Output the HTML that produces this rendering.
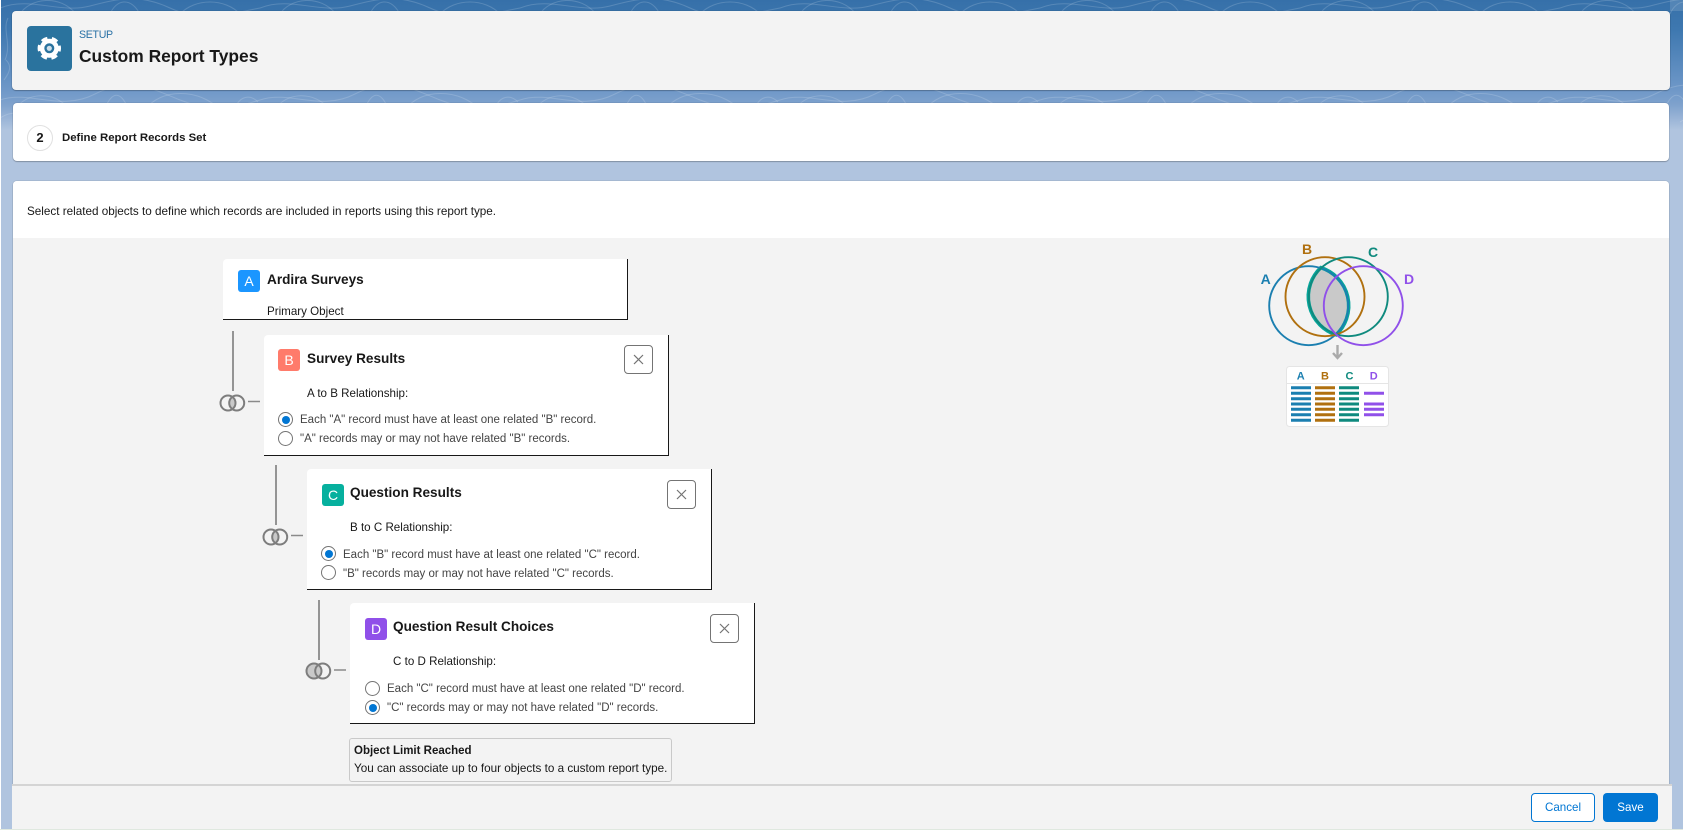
<!DOCTYPE html>
<html><head><meta charset="utf-8"><title>Custom Report Types</title>
<style>
*{box-sizing:border-box}
html,body{margin:0;padding:0;width:1683px;height:830px;overflow:hidden;background:#b0c4df;font-family:"Liberation Sans",sans-serif;color:#181818}
.a{position:absolute}
.t{position:absolute;white-space:nowrap;line-height:16px;font-size:11.6px}
.card{position:absolute;background:#fff;border-radius:4px;box-shadow:0 0 0 1px rgba(0,0,0,.06),0 1px 1px rgba(0,0,0,.22)}
.obj{position:absolute;background:#fff;border-right:1px solid #181818;border-bottom:1px solid #181818;border-radius:4px 0 0 0;width:405px;height:121px}
.badge{position:absolute;width:22px;height:22px;border-radius:3px;color:#fff;text-align:center;font-size:14px;line-height:23px}
.ttl{position:absolute;font-weight:bold;font-size:13.6px;line-height:18px;white-space:nowrap}
.x{position:absolute;width:29px;height:29px;border:1px solid #747474;border-radius:4px;background:#fff}
.r{position:absolute;width:15px;height:15px;border-radius:50%;border:1px solid #747474;background:#fff}
.r.on:after{content:"";position:absolute;left:2.5px;top:2.5px;width:8px;height:8px;border-radius:50%;background:#0176d3}
.g{color:#444;font-size:11.5px}
.ln{position:absolute;width:2px;height:60px;background:#949494}
</style></head><body>
<div class="a" style="left:0;top:0;width:1683px;height:135px;background:linear-gradient(#3670a9 0,#3e78b0 30px,#6f98c8 90px,#7fa2cd 105px,#b0c4df 130px)"></div>
<div class="a" style="left:0;top:0;width:1px;height:830px;background:#fff"></div>
<svg class="a" style="left:0;top:0" width="1683" height="125" fill="none">
<defs><pattern id="p" width="260" height="125" patternUnits="userSpaceOnUse">
<g stroke="#fff" stroke-opacity=".16" stroke-width="1" fill="none">
<path d="M0 8C30 -4 60 14 90 6S140 -6 170 8S230 14 260 8"/>
<path d="M20 14C30 -2 60 -6 76 14M110 14C116 0 130 -4 140 14M180 14C195 -2 225 -2 240 14"/>
<path d="M0 100C30 90 60 112 95 94S150 88 180 100S235 108 260 100"/>
<path d="M15 110C25 92 55 90 70 110M105 108C112 92 120 90 128 108M145 110C160 88 200 88 220 110M235 108C240 96 250 94 258 102"/>
<path d="M5 60C12 44 2 30 8 18M255 70C262 50 250 40 258 20M4 80C10 72 12 66 6 60"/>
<path d="M0 118C12 110 28 112 40 120M120 122C140 110 170 110 190 122"/>
</g></pattern></defs>
<rect width="1683" height="125" fill="url(#p)"/>
</svg>
<div class="a" style="left:1670px;top:0;width:13px;height:11px;background:rgba(255,255,255,.14)"></div>

<div class="card" style="left:12px;top:11px;width:1658px;height:79px;background:#f3f3f3"></div>
<div class="a" style="left:27px;top:26px;width:45px;height:45px;background:#2a739e;border-radius:4px"></div>
<svg class="a" style="left:27px;top:26px" width="45" height="45" fill="none">
<circle cx="22.3" cy="22.3" r="7.25" stroke="#fff" stroke-width="4.5"/>
<circle cx="22.3" cy="22.3" r="10.4" stroke="#fff" stroke-width="2.6" stroke-dasharray="6.2 4.69" stroke-dashoffset="3.1"/>
<circle cx="22.3" cy="22.3" r="2.6" fill="#cfe0ea"/>
</svg>
<div class="t" style="left:79px;top:27px;color:#2a72a6;font-size:10.6px;letter-spacing:-.3px">SETUP</div>
<div class="t" style="left:79px;top:46px;font-size:17.4px;line-height:20px;font-weight:bold">Custom Report Types</div>

<div class="card" style="left:13px;top:103px;width:1656px;height:58px"></div>
<div class="a" style="left:27px;top:125px;width:26px;height:26px;border:1px solid #e0e0e0;border-radius:50%;text-align:center;font-size:13px;line-height:24px;font-weight:bold;background:#fff">2</div>
<div class="t" style="left:62px;top:130px;font-size:11.4px;font-weight:bold">Define Report Records Set</div>

<div class="card" style="left:13px;top:181px;width:1656px;height:620px;background:#f3f3f3"></div>
<div class="a" style="left:13px;top:181px;width:1656px;height:57px;background:#fff;border-radius:4px 4px 0 0"></div>
<div class="t" style="left:27px;top:204px;font-size:11.7px">Select related objects to define which records are included in reports using this report type.</div>

<!-- A -->
<div class="obj" style="left:223px;top:259px;height:61px"></div>
<div class="badge" style="left:238px;top:270px;background:#1b96ff">A</div>
<div class="ttl" style="left:267px;top:271px">Ardira Surveys</div>
<div class="t" style="left:267px;top:304px">Primary Object</div>

<!-- B -->
<div class="ln" style="left:232px;top:331px"></div>
<svg class="a" style="left:215px;top:390px" width="50" height="26" fill="none">
<path d="M17.35 6.6A7.5 7.5 0 0 1 17.35 19.4A7.5 7.5 0 0 1 17.35 6.6Z" fill="#c9c9c9"/>
<circle cx="13" cy="13" r="7.5" stroke="#7d7d7d" stroke-width="2"/><circle cx="21.7" cy="13" r="7.5" stroke="#7d7d7d" stroke-width="2"/>
<path d="M33 11.5H45" stroke="#8a8a8a" stroke-width="1.5"/></svg>
<div class="obj" style="left:264px;top:335px"></div>
<div class="badge" style="left:278px;top:349px;background:#ff7b6b">B</div>
<div class="ttl" style="left:307px;top:350px">Survey Results</div>
<div class="x" style="left:624px;top:345px"><svg width="27" height="27" fill="none" stroke="#747474" stroke-width="1.2"><path d="M9 9L18 18M18 9L9 18"/></svg></div>
<div class="t" style="left:307px;top:386px">A to B Relationship:</div>
<div class="r on" style="left:278px;top:412px"></div>
<div class="t g" style="left:300px;top:412px">Each "A" record must have at least one related "B" record.</div>
<div class="r" style="left:278px;top:431px"></div>
<div class="t g" style="left:300px;top:431px">"A" records may or may not have related "B" records.</div>

<!-- C -->
<div class="ln" style="left:275px;top:465px"></div>
<svg class="a" style="left:258px;top:524px" width="50" height="26" fill="none">
<path d="M17.35 6.6A7.5 7.5 0 0 1 17.35 19.4A7.5 7.5 0 0 1 17.35 6.6Z" fill="#c9c9c9"/>
<circle cx="13" cy="13" r="7.5" stroke="#7d7d7d" stroke-width="2"/><circle cx="21.7" cy="13" r="7.5" stroke="#7d7d7d" stroke-width="2"/>
<path d="M33 11.5H45" stroke="#8a8a8a" stroke-width="1.5"/></svg>
<div class="obj" style="left:307px;top:469px"></div>
<div class="badge" style="left:322px;top:484px;background:#06b09e">C</div>
<div class="ttl" style="left:350px;top:484px">Question Results</div>
<div class="x" style="left:667px;top:480px"><svg width="27" height="27" fill="none" stroke="#747474" stroke-width="1.2"><path d="M9 9L18 18M18 9L9 18"/></svg></div>
<div class="t" style="left:350px;top:520px">B to C Relationship:</div>
<div class="r on" style="left:321px;top:546px"></div>
<div class="t g" style="left:343px;top:547px">Each "B" record must have at least one related "C" record.</div>
<div class="r" style="left:321px;top:565px"></div>
<div class="t g" style="left:343px;top:566px">"B" records may or may not have related "C" records.</div>

<!-- D -->
<div class="ln" style="left:318px;top:600px"></div>
<svg class="a" style="left:301px;top:658px" width="50" height="26" fill="none">
<circle cx="13" cy="13" r="7.5" fill="#c9c9c9"/>
<circle cx="13" cy="13" r="7.5" stroke="#7d7d7d" stroke-width="2"/><circle cx="21.7" cy="13" r="7.5" stroke="#7d7d7d" stroke-width="2"/>
<path d="M33 12H45" stroke="#8a8a8a" stroke-width="1.5"/></svg>
<div class="obj" style="left:350px;top:603px"></div>
<div class="badge" style="left:365px;top:618px;background:#9050e9">D</div>
<div class="ttl" style="left:393px;top:618px">Question Result Choices</div>
<div class="x" style="left:710px;top:614px"><svg width="27" height="27" fill="none" stroke="#747474" stroke-width="1.2"><path d="M9 9L18 18M18 9L9 18"/></svg></div>
<div class="t" style="left:393px;top:654px">C to D Relationship:</div>
<div class="r" style="left:365px;top:681px"></div>
<div class="t g" style="left:387px;top:681px">Each "C" record must have at least one related "D" record.</div>
<div class="r on" style="left:365px;top:700px"></div>
<div class="t g" style="left:387px;top:700px">"C" records may or may not have related "D" records.</div>

<div class="a" style="left:349px;top:738px;width:323px;height:44px;border:1px solid #c9c9c9;border-radius:3px;background:#f3f3f3"></div>
<div class="t" style="left:354px;top:743px;font-weight:bold;font-size:11.5px">Object Limit Reached</div>
<div class="t" style="left:354px;top:761px;font-size:11.7px">You can associate up to four objects to a custom report type.</div>

<!-- Venn -->
<svg class="a" style="left:1240px;top:230px" width="200" height="210" viewBox="1240 230 200 210" fill="none">
<path d="M1320.85 267.6A40 40 0 0 0 1336.15 334.8A40 40 0 0 0 1320.85 267.6Z" fill="#c9c9c9" stroke="#06a59a" stroke-width="3.6"/>
<circle cx="1308.7" cy="305.7" r="39.5" stroke="#1b7fb0" stroke-width="1.9"/>
<circle cx="1325" cy="296.7" r="39.5" stroke="#b0700f" stroke-width="1.9"/>
<circle cx="1348.3" cy="296.7" r="39.5" stroke="#0f8a7e" stroke-width="1.9"/>
<circle cx="1363.3" cy="305.7" r="39.5" stroke="#9050e9" stroke-width="1.9"/>
<g font-family="Liberation Sans,sans-serif" font-weight="bold" font-size="14" text-anchor="middle">
<text x="1265.7" y="284" fill="#1b7fb0">A</text><text x="1307" y="254" fill="#b0700f">B</text><text x="1373" y="257" fill="#0f8a7e">C</text><text x="1409" y="284" fill="#9050e9">D</text></g>
<path d="M1337.5 345V358M1333 353L1337.5 358L1342 353" stroke="#aaa" stroke-width="2.4"/>
<rect x="1286.5" y="366.5" width="102" height="60" rx="3" fill="#fff" stroke="#e5e5e5"/>
<path d="M1287 383.5H1388" stroke="#e5e5e5"/>
<g font-family="Liberation Sans,sans-serif" font-weight="bold" font-size="11" text-anchor="middle">
<text x="1300.7" y="379.5" fill="#1b7fb0">A</text><text x="1325" y="379.5" fill="#b0700f">B</text><text x="1349.5" y="379.5" fill="#0f8a7e">C</text><text x="1373.7" y="379.5" fill="#9050e9">D</text></g>
<path stroke="#1b7fb0" stroke-width="3" d="M1291 387.7h20M1291 393.3h20M1291 398.7h20M1291 404h20M1291 409.3h20M1291 414.7h20M1291 420.3h20"/>
<path stroke="#b0700f" stroke-width="3" d="M1315 387.7h20M1315 393.3h20M1315 398.7h20M1315 404h20M1315 409.3h20M1315 414.7h20M1315 420.3h20"/>
<path stroke="#0f8a7e" stroke-width="3" d="M1339 387.7h20M1339 393.3h20M1339 398.7h20M1339 404h20M1339 409.3h20M1339 414.7h20M1339 420.3h20"/>
<path stroke="#9050e9" stroke-width="3" d="M1364 393.3h20M1364 404h20M1364 409.3h20M1364 414.7h20"/>
</svg>

<!-- Footer -->
<div class="a" style="left:12px;top:784px;width:1660px;height:46px;background:#f3f3f3;border-top:2px solid #d4d4d4"></div>
<div class="a" style="left:0;top:829px;width:1683px;height:1px;background:#dfe8df"></div>
<div class="a" style="left:1531px;top:793px;width:64px;height:29px;border:1px solid #0176d3;border-radius:4px;background:#fff;color:#0176d3;font-size:11.6px;line-height:27px;text-align:center">Cancel</div>
<div class="a" style="left:1603px;top:793px;width:55px;height:29px;border-radius:4px;background:#0176d3;color:#fff;font-size:11.6px;line-height:29px;text-align:center">Save</div>
</body></html>
